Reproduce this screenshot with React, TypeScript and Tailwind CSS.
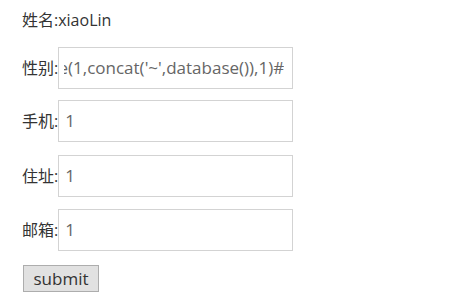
import React from "react";

const font = { fontFamily: '"Open Sans", "Noto Sans CJK SC", sans-serif' };

function Row({ label, value, mt, scroll }: { label: string; value: string; mt: string; scroll?: boolean }) {
  return (
    <div className={`flex items-center h-[42px] ${mt}`}>
      <span className="text-[16px] text-[#333]">{label}</span>
      <div className="w-[235px] h-[42px] border border-[#d3d3d3] flex items-center pl-[5px] pr-[8px]">
        <div
          className={`flex-1 flex overflow-hidden whitespace-nowrap text-[17px] text-[#666] ${
            scroll ? "justify-end" : "pl-[1px]"
          }`}
        >
          {value}
        </div>
      </div>
    </div>
  );
}

export default function App() {
  return (
    <div className="bg-white w-[454px] h-[308px] pt-[9px] pl-[22px]" style={font}>
      <div className="h-[22px] leading-[22px] text-[16px] text-[#333]">姓名:xiaoLin</div>
      <Row label="性别:" value="extractvalue(1,concat('~',database()),1)#" mt="mt-[16px]" scroll />
      <Row label="手机:" value="1" mt="mt-[11px]" />
      <Row label="住址:" value="1" mt="mt-[13px]" />
      <Row label="邮箱:" value="1" mt="mt-[12px]" />
      <button className="mt-[14px] ml-[1px] w-[76px] h-[27px] bg-[#e1e1e1] border border-[#adadad] text-[17px] text-[#333] leading-none">
        submit
      </button>
    </div>
  );
}
